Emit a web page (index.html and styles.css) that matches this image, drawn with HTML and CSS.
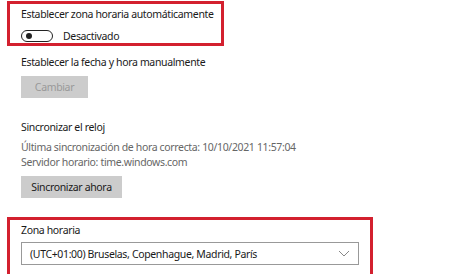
FILE: index.html
```html
<!DOCTYPE html>
<html lang="es">

<head>
    <meta charset="UTF-8">
    <meta name="viewport" content="width=device-width, initial-scale=1.0">
    <title>Fecha y hora</title>
    <link rel="stylesheet" href="styles.css">
</head>

<body>
    <div class="page">
        <div class="mark auto">
            <div class="label">Establecer zona horaria automáticamente</div>
            <div class="toggle-row">
                <span class="toggle"><span class="thumb"></span></span>
                <span class="state">Desactivado</span>
            </div>
        </div>

        <div class="section manual">
            <div class="label">Establecer la fecha y hora manualmente</div>
            <button class="btn" disabled>Cambiar</button>
        </div>

        <div class="section sync">
            <div class="label">Sincronizar el reloj</div>
            <div class="info">
                <div>Última sincronización de hora correcta: 10/10/2021 11:57:04</div>
                <div>Servidor horario: time.windows.com</div>
            </div>
            <button class="btn">Sincronizar ahora</button>
        </div>

        <div class="mark zone">
            <div class="label">Zona horaria</div>
            <div class="select">
                <span>(UTC+01:00) Bruselas, Copenhague, Madrid, París</span>
                <svg width="12" height="7" viewBox="0 0 12 7">
                    <path d="M1 1 L6 6 L11 1" fill="none" stroke="#888" stroke-width="1"/>
                </svg>
            </div>
        </div>
    </div>
</body>

</html>
```

FILE: styles.css
```css
body {
    margin: 0;
    background-color: #fff;
    font-family: "Noto Sans", "Open Sans", sans-serif;
    font-size: 10.5px;
    letter-spacing: -0.35px;
    color: #1a1a1a;
}

.page {
    width: 474px;
    height: 274px;
    overflow: hidden;
    padding: 1px 0 0 7px;
    box-sizing: border-box;
    white-space: nowrap;
}

.label {
    line-height: 15px;
}

/* red highlight boxes */

.mark {
    border: 3px solid #d3202f;
    box-sizing: border-box;
}

.auto {
    width: 217px;
    height: 45px;
    padding: 3px 0 0 11px;
}

.toggle-row {
    display: flex;
    align-items: center;
    margin-top: 7px;
}

.toggle {
    display: flex;
    align-items: center;
    width: 32px;
    height: 12px;
    border: 1.5px solid #222;
    border-radius: 8px;
    box-sizing: border-box;
    padding-left: 4px;
}

.thumb {
    width: 6px;
    height: 6px;
    border-radius: 50%;
    background-color: #222;
}

.state {
    margin-left: 10px;
    line-height: 14px;
}

.section {
    padding-left: 14px;
}

.manual {
    margin-top: 9px;
}

.btn {
    display: block;
    margin-top: 6px;
    height: 22px;
    padding: 0;
    border: none;
    background-color: #cccccc;
    font-family: inherit;
    font-size: 10.5px;
    letter-spacing: -0.35px;
    color: #1a1a1a;
    white-space: nowrap;
}

.btn:disabled {
    color: #999;
}

.manual .btn {
    width: 67px;
}

.sync {
    margin-top: 22px;
}

.info {
    margin-top: 5px;
    color: #666;
    line-height: 15px;
}

.sync .btn {
    width: 101px;
    margin-top: 6px;
}

.zone {
    margin-top: 19px;
    width: 366px;
    height: 60px;
    padding: 3px 0 0 11px;
}

.select {
    display: flex;
    align-items: center;
    justify-content: space-between;
    width: 338px;
    height: 23px;
    margin-top: 4px;
    padding: 0 8px 0 8px;
    border: 1.5px solid #999;
    box-sizing: border-box;
}
```
